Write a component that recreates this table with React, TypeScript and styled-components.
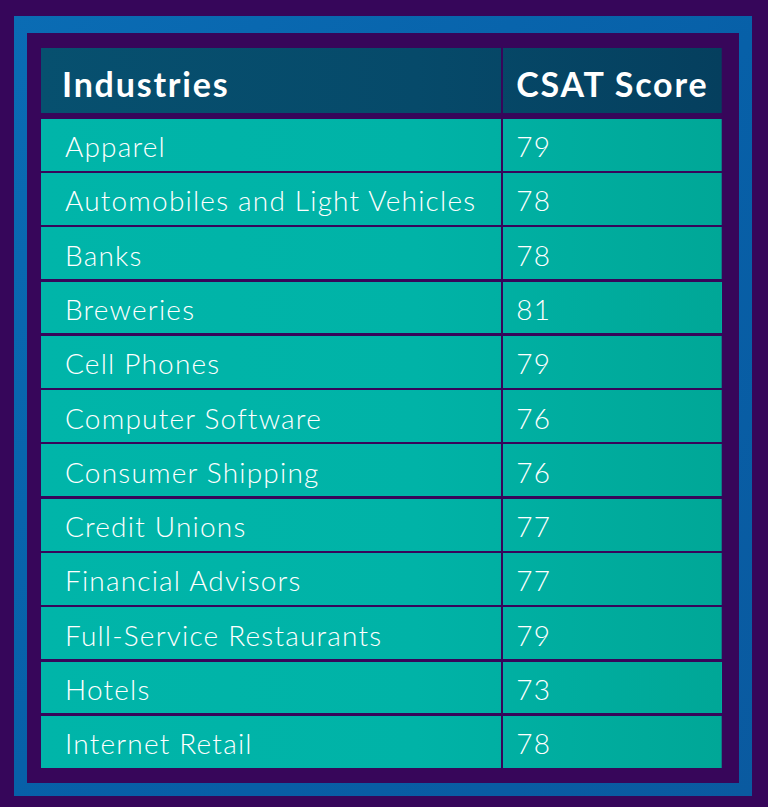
import React from "react";
import styled, { createGlobalStyle } from "styled-components";

const Global = createGlobalStyle`
  html, body { margin: 0; padding: 0; background: #36065a; }
  * { box-sizing: border-box; }
`;

const Page = styled.div`
  width: 768px;
  height: 807px;
  padding: 16px 16px 11px 14px;
  background: #36065a;
  font-family: Lato, "Noto Sans", sans-serif;
`;

const BlueFrame = styled.div`
  height: 100%;
  padding: 17px 13px 13px 13px;
  background: linear-gradient(135deg, #0a6cb4 0%, #0760a8 50%, #0a5aa0 100%);
`;

const InnerFrame = styled.div`
  height: 100%;
  padding: 15px 17px 15px 14px;
  background: #37065a;
`;

const Table = styled.div`
  display: flex;
  flex-direction: column;
  height: 100%;
`;

const Row = styled.div<{ $header?: boolean }>`
  display: grid;
  grid-template-columns: 1fr 218.7px;
  column-gap: 2.6px;
  height: ${(p) => (p.$header ? "64.7px" : "51.9px")};
  margin-bottom: ${(p) => (p.$header ? "6px" : "2.4px")};
  &:last-child { margin-bottom: 0; }
`;

const Cell = styled.div<{ $header?: boolean; $score?: boolean }>`
  display: flex;
  align-items: center;
  padding-top: ${(p) => (p.$header ? "6px" : "3px")};
  padding-left: ${(p) => (p.$score ? "13px" : p.$header ? "21px" : "24px")};
  color: #ffffff;
  font-size: ${(p) => (p.$header ? "34px" : "28px")};
  font-weight: ${(p) => (p.$header ? 700 : 300)};
  letter-spacing: ${(p) => (p.$header ? "1.8px" : "1.2px")};
  white-space: nowrap;
  background-image: ${(p) =>
    p.$header
      ? "linear-gradient(90deg, #07506f 0%, #064a6a 55%, #053f5e 100%)"
      : "linear-gradient(90deg, #00b5a9 0%, #00b3a7 55%, #00a797 100%)"};
  background-size: 681px 100%;
  background-position: ${(p) => (p.$score ? "-462.3px 0" : "0 0")};
`;

const rows: [string, number][] = [
  ["Apparel", 79],
  ["Automobiles and Light Vehicles", 78],
  ["Banks", 78],
  ["Breweries", 81],
  ["Cell Phones", 79],
  ["Computer Software", 76],
  ["Consumer Shipping", 76],
  ["Credit Unions", 77],
  ["Financial Advisors", 77],
  ["Full-Service Restaurants", 79],
  ["Hotels", 73],
  ["Internet Retail", 78],
];

export default function App() {
  return (
    <>
      <Global />
      <Page>
        <BlueFrame>
          <InnerFrame>
            <Table>
              <Row $header>
                <Cell $header>Industries</Cell>
                <Cell $header $score>CSAT Score</Cell>
              </Row>
              {rows.map(([name, score]) => (
                <Row key={name}>
                  <Cell>{name}</Cell>
                  <Cell $score>{score}</Cell>
                </Row>
              ))}
            </Table>
          </InnerFrame>
        </BlueFrame>
      </Page>
    </>
  );
}
